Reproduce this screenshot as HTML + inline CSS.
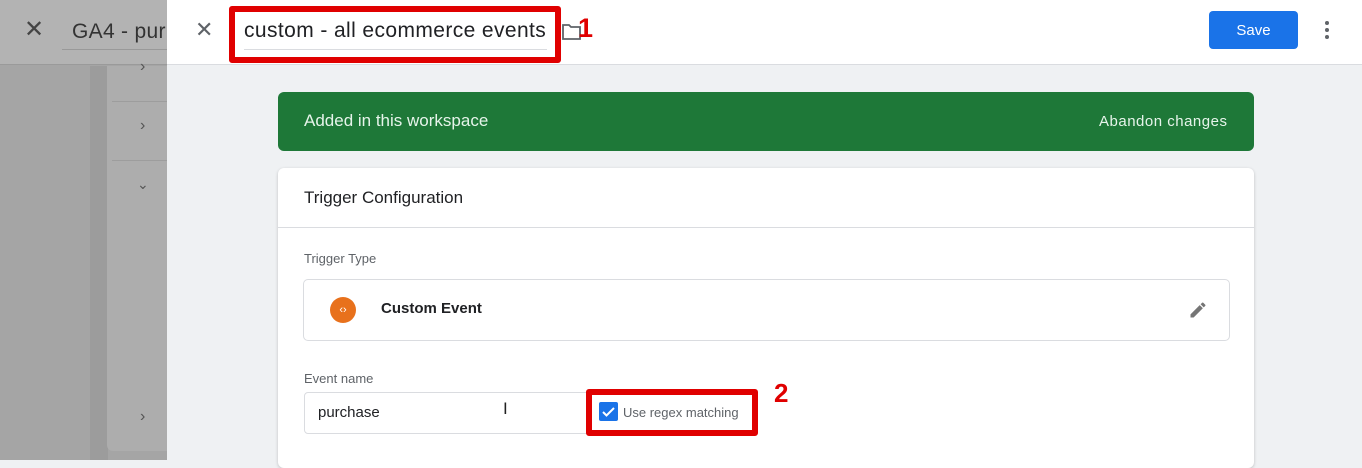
<!DOCTYPE html>
<html><head><style>
*{margin:0;padding:0;box-sizing:border-box}
body{width:1362px;height:460px;overflow:hidden;position:relative;font-family:"Liberation Sans",Arial,sans-serif;background:#eff1f3}
.abs{position:absolute}
</style></head><body>
<div class="abs" style="left:0;top:0;width:167px;height:460px;background:#a5a5a5"></div>
<div class="abs" style="left:0;top:0;width:167px;height:65px;background:#b3b3b3;border-bottom:1px solid #9a9a9a"></div>
<div class="abs" style="left:24px;top:15px;font-size:24px;color:#444">✕</div>
<div class="abs" style="left:72px;top:20px;font-size:21px;color:#333;letter-spacing:0.3px">GA4 - pur</div>
<div class="abs" style="left:62px;top:49px;width:105px;height:1px;background:#999"></div>
<div class="abs" style="left:90px;top:66px;width:18px;height:394px;background:#9c9c9c"></div>
<div class="abs" style="left:107px;top:66px;width:60px;height:385px;background:#adadad;border-radius:0 0 0 6px"></div>
<div class="abs" style="left:112px;top:101px;width:55px;height:1px;background:#9d9d9d"></div>
<div class="abs" style="left:112px;top:160px;width:55px;height:1px;background:#9d9d9d"></div>
<div class="abs" style="left:140px;top:58px;font-size:16px;color:#555">›</div>
<div class="abs" style="left:140px;top:117px;font-size:16px;color:#555">›</div>
<div class="abs" style="left:137px;top:176px;font-size:14px;color:#555">⌄</div>
<div class="abs" style="left:140px;top:408px;font-size:16px;color:#555">›</div>
<div class="abs" style="left:167px;top:0;width:1195px;height:65px;background:#fff;border-bottom:1px solid #dadce0"></div>
<div class="abs" style="left:195px;top:17px;font-size:22px;color:#5f6368">✕</div>
<div class="abs" style="left:229px;top:6px;width:332px;height:57px;border:6px solid #e00000;border-radius:3px;background:#fff"></div>
<div class="abs" style="left:244px;top:19px;font-size:21px;color:#202124;letter-spacing:0.4px">custom - all ecommerce events</div>
<div class="abs" style="left:244px;top:49px;width:303px;height:1px;background:#dadce0"></div>
<svg class="abs" style="left:561px;top:22px" width="22" height="20" viewBox="0 0 22 20"><path d="M2 3h6l2 2h9v12H2z" fill="none" stroke="#5f6368" stroke-width="1.8"/></svg>
<div class="abs" style="left:578px;top:13px;font-size:27px;font-weight:bold;color:#e00000">1</div>
<div class="abs" style="left:1209px;top:11px;width:89px;height:38px;background:#1a73e8;border-radius:4px;color:#fff;font-size:15px;text-align:center;line-height:40px">Save</div>
<div class="abs" style="left:1325px;top:21px;width:4px;height:4px;border-radius:2px;background:#5f6368;box-shadow:0 7px 0 #5f6368,0 14px 0 #5f6368"></div>
<div class="abs" style="left:278px;top:92px;width:976px;height:59px;background:#1e7838;border-radius:6px"></div>
<div class="abs" style="left:304px;top:111px;font-size:17px;color:#e6f4ea">Added in this workspace</div>
<div class="abs" style="left:1099px;top:113px;font-size:15px;color:#e6f4ea;letter-spacing:0.5px">Abandon changes</div>
<div class="abs" style="left:278px;top:168px;width:976px;height:300px;background:#fff;border-radius:6px;box-shadow:0 1px 3px rgba(0,0,0,.2)"></div>
<div class="abs" style="left:304px;top:188px;font-size:17px;color:#202124">Trigger Configuration</div>
<div class="abs" style="left:278px;top:227px;width:976px;height:1px;background:#dadce0"></div>
<div class="abs" style="left:304px;top:251px;font-size:13px;color:#5f6368">Trigger Type</div>
<div class="abs" style="left:303px;top:279px;width:927px;height:62px;border:1px solid #dadce0;border-radius:5px"></div>
<div class="abs" style="left:330px;top:297px;width:26px;height:26px;border-radius:13px;background:#e8711c;color:#fff;font-size:11px;text-align:center;line-height:26px">‹›</div>
<div class="abs" style="left:381px;top:300px;font-size:15px;font-weight:bold;color:#202124">Custom Event</div>
<svg class="abs" style="left:1188px;top:300px" width="20" height="20" viewBox="0 0 24 24"><path d="M3 17.25V21h3.75L17.8 9.94l-3.75-3.75L3 17.25zM20.7 7.04a1 1 0 000-1.41l-2.34-2.34a1 1 0 00-1.41 0l-1.83 1.83 3.75 3.75 1.83-1.83z" fill="#757575"/></svg>
<div class="abs" style="left:304px;top:371px;font-size:13px;color:#5f6368">Event name</div>
<div class="abs" style="left:304px;top:392px;width:300px;height:42px;border:1px solid #dadce0;border-radius:4px"></div>
<div class="abs" style="left:318px;top:404px;font-size:15px;color:#202124">purchase</div>
<div class="abs" style="left:503px;top:399px;font-size:17px;color:#222">I</div>
<div class="abs" style="left:586px;top:389px;width:172px;height:47px;border:6px solid #e00000;border-radius:3px;background:#fff"></div>
<div class="abs" style="left:599px;top:402px;width:19px;height:19px;background:#1a73e8;border-radius:2px"></div>
<svg class="abs" style="left:601px;top:404px" width="15" height="15" viewBox="0 0 15 15"><path d="M2 8l3.5 3.5L13 4" fill="none" stroke="#fff" stroke-width="2"/></svg>
<div class="abs" style="left:623px;top:405px;font-size:13px;color:#5f6368">Use regex matching</div>
<div class="abs" style="left:774px;top:378px;font-size:26px;font-weight:bold;color:#e00000">2</div>
</body></html>
